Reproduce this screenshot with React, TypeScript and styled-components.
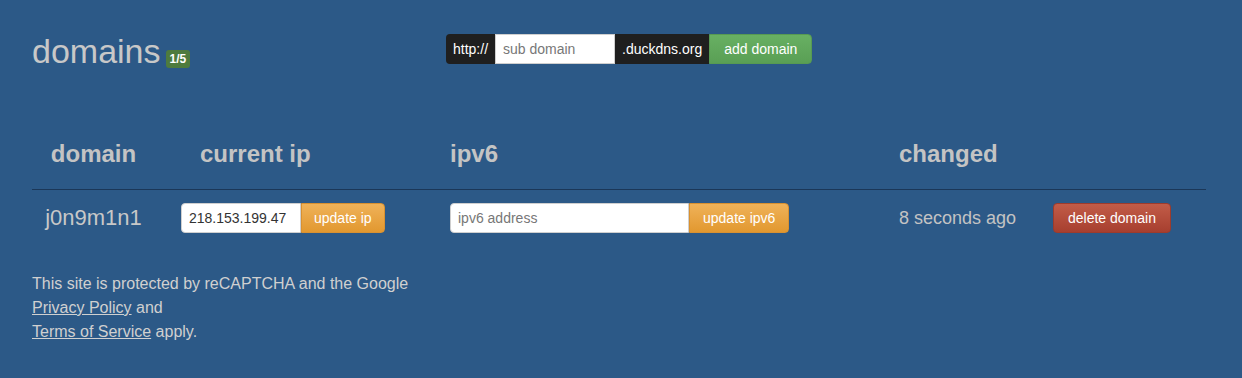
import React from "react";
import styled, { createGlobalStyle } from "styled-components";

const GlobalStyle = createGlobalStyle`
  html, body {
    margin: 0;
    padding: 0;
    background: #2c5987;
    font-family: "Liberation Sans", Arial, Helvetica, sans-serif;
  }
`;

interface DomainRow {
  name: string;
  ip: string;
  changed: string;
}

const domains: DomainRow[] = [
  { name: "j0n9m1n1", ip: "218.153.199.47", changed: "8 seconds ago" },
];

const App: React.FC = () => {
  return (
    <Page>
      <GlobalStyle />
      <TopBar>
        <Title>
          domains<Badge>1/5</Badge>
        </Title>
        <AddForm>
          <Addon side="left">http://</Addon>
          <TextField placeholder="sub domain" width={120} />
          <Addon>.duckdns.org</Addon>
          <Button tone="green" side="right" pad={14}>
            add domain
          </Button>
        </AddForm>
      </TopBar>

      <Table>
        <HeadCell align="center">domain</HeadCell>
        <HeadCell indent={19}>current ip</HeadCell>
        <HeadCell>ipv6</HeadCell>
        <HeadCell>changed</HeadCell>
        <HeadCell />
        {domains.map(d => (
          <React.Fragment key={d.name}>
            <Cell align="center">
              <DomainName>{d.name}</DomainName>
            </Cell>
            <Cell>
              <Group>
                <TextField defaultValue={d.ip} width={120} rounded />
                <Button tone="orange" side="right" pad={12}>
                  update ip
                </Button>
              </Group>
            </Cell>
            <Cell>
              <Group>
                <TextField placeholder="ipv6 address" width={239} rounded />
                <Button tone="orange" side="right" pad={13}>
                  update ipv6
                </Button>
              </Group>
            </Cell>
            <Cell>
              <Changed>{d.changed}</Changed>
            </Cell>
            <Cell>
              <Button tone="red" pad={14}>
                delete domain
              </Button>
            </Cell>
          </React.Fragment>
        ))}
      </Table>

      <Notice>
        This site is protected by reCAPTCHA and the Google
        <br />
        <a href="#">Privacy Policy</a> and
        <br />
        <a href="#">Terms of Service</a> apply.
      </Notice>
    </Page>
  );
};

const Page = styled.div`
  min-height: 378px;
  box-sizing: border-box;
  padding: 31px 36px 0 32px;
  color: #c6c6c6;
`;

const TopBar = styled.div`
  display: flex;
  align-items: flex-start;
`;

const Title = styled.h1`
  width: 414px;
  margin: 0;
  display: flex;
  align-items: baseline;
  font-size: 34px;
  line-height: 40px;
  font-weight: normal;
  color: #c8c8c8;
`;

const Badge = styled.span`
  margin-left: 5px;
  padding: 3px 4px;
  border-radius: 3px;
  background: #4e7b3e;
  color: #fff;
  font-size: 12px;
  line-height: 12px;
  font-weight: bold;
`;

const AddForm = styled.form`
  display: flex;
  height: 30px;
  margin: 3px 0 0;
`;

type Side = "left" | "right" | "both";

const radius = (side?: Side) =>
  side === "left"
    ? "4px 0 0 4px"
    : side === "right"
      ? "0 4px 4px 0"
      : side === "both"
        ? "4px"
        : "0";

const Addon = styled.span<{ side?: Side }>`
  display: flex;
  align-items: center;
  padding: 0 7px;
  background: #1f1f1f;
  color: #fff;
  font-size: 14px;
  border-radius: ${p => radius(p.side)};
`;

const TextField = styled.input<{ width: number; rounded?: boolean }>`
  box-sizing: border-box;
  width: ${p => p.width}px;
  height: 30px;
  margin: 0;
  padding: 0 7px;
  border: 1px solid #cfcfcf;
  border-radius: ${p => (p.rounded ? "4px 0 0 4px" : "0")};
  background: #fff;
  color: #333;
  font-family: inherit;
  font-size: 14px;
  outline: none;

  &::placeholder {
    color: #777;
  }
`;

const tones = {
  green: { top: "#68b063", bottom: "#5a9f55", border: "#579a52" },
  orange: { top: "#efb259", bottom: "#e2982f", border: "#d99130" },
  red: { top: "#c25c48", bottom: "#a73f2f", border: "#9d3b2c" },
};

const Button = styled.button<{
  tone: keyof typeof tones;
  side?: Side;
  pad: number;
}>`
  box-sizing: border-box;
  height: 30px;
  margin: 0;
  padding: 0 ${p => p.pad}px;
  border: 1px solid ${p => tones[p.tone].border};
  border-radius: ${p => radius(p.side ?? "both")};
  background: linear-gradient(
    ${p => tones[p.tone].top},
    ${p => tones[p.tone].bottom}
  );
  color: #fff;
  font-family: inherit;
  font-size: 14px;
  white-space: nowrap;
  cursor: pointer;
`;

const Table = styled.div`
  display: grid;
  grid-template-columns: 149px 269px 449px 154px 1fr;
  margin-top: 69px;
`;

const HeadCell = styled.div<{ align?: "center"; indent?: number }>`
  padding: 0 ${p => (p.align ? 26 : 0)}px 21px ${p => p.indent ?? 0}px;
  border-bottom: 1px solid #1b3758;
  text-align: ${p => p.align ?? "left"};
  font-size: 24px;
  line-height: 28px;
  font-weight: bold;
  color: #c4c4c4;
`;

const Cell = styled.div<{ align?: "center" }>`
  display: flex;
  align-items: center;
  justify-content: ${p => (p.align ? "center" : "flex-start")};
  padding: 13px ${p => (p.align ? 26 : 0)}px 0 0;
  height: 30px;
`;

const Group = styled.div`
  display: flex;
`;

const DomainName = styled.span`
  font-size: 22px;
  color: #c8c8c8;
`;

const Changed = styled.span`
  font-size: 18px;
  color: #c3c3c3;
`;

const Notice = styled.p`
  margin: 39px 0 0;
  font-size: 16px;
  line-height: 24px;
  color: #d0d0d0;

  a {
    color: #d0d0d0;
    text-decoration: underline;
  }
`;

export default App;
